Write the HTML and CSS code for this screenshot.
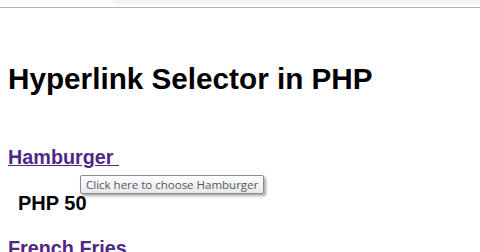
FILE: index.html
```html
<!DOCTYPE html>
<html>
<head>
<meta charset="utf-8">
<link rel="stylesheet" href="styles.css">
</head>
<body>
<div class="chrome">
  <div class="chrome-left"></div>
  <div class="chrome-tab"></div>
</div>
<div class="page">
  <h1 class="title">Hyperlink Selector in PHP</h1>
  <div class="item">
    <a class="link" href="#" title="Click here to choose Hamburger">Hamburger </a>
    <span class="tooltip">Click here to choose Hamburger</span>
  </div>
  <div class="price">PHP 50</div>
  <div class="item">
    <a class="link" href="#">French Fries</a>
  </div>
</div>
</body>
</html>
```
FILE: styles.css
```css
html, body {
  margin: 0;
  padding: 0;
  background: #fff;
  overflow: hidden;
}
body {
  width: 480px;
  height: 252px;
  font-family: "Liberation Sans", Arial, sans-serif;
}
.chrome {
  display: flex;
  height: 7px;
  border-bottom: 1px solid #b3b3b3;
  align-items: flex-start;
}
.chrome-left {
  width: 113px;
  height: 4px;
  background: #fbfbfb;
}
.chrome-tab {
  flex: 1;
  height: 4px;
  background: #f1f2f4;
  border-bottom-left-radius: 4px;
}
.page {
  padding: 0 8px;
}
.title {
  margin: 0;
  padding-top: 55px;
  font-size: 29.7px;
  font-weight: bold;
  line-height: 32px;
  color: #000;
}
.item {
  position: relative;
  margin-top: 50px;
  line-height: 24px;
}
.link {
  font-size: 19.8px;
  font-weight: bold;
  color: #4f2886;
  text-decoration: underline;
  white-space: pre;
}
.tooltip {
  position: absolute;
  left: 72px;
  top: 30px;
  height: 17px;
  padding: 0 5px;
  border: 1px solid #8c8c8c;
  border-radius: 2px;
  background: linear-gradient(#ffffff, #e8e9ef);
  box-shadow: 2px 2px 3px rgba(0,0,0,0.35);
  font-family: "Open Sans", "DejaVu Sans", sans-serif;
  font-size: 11.5px;
  line-height: 17px;
  color: #575757;
  white-space: nowrap;
}
.price {
  margin-top: 20px;
  padding-left: 10px;
  font-size: 20px;
  font-weight: bold;
  line-height: 24px;
  color: #000;
}
.price + .item {
  margin-top: 21px;
}
```
